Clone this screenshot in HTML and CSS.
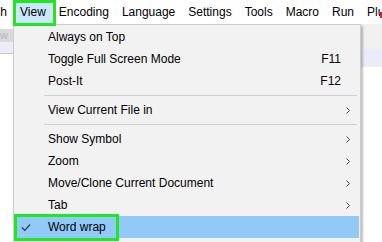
FILE: index.html
```
<!DOCTYPE html>
<html lang="en">
  <head>
    <meta charset="UTF-8">
    <title>View menu</title>
    <link rel="stylesheet" href="styles.css">
  </head>
  <body>
    <div class="app">
      <nav class="menubar">
        <span class="item">Search</span>
        <span class="item open">View</span>
        <span class="item">Encoding</span>
        <span class="item">Language</span>
        <span class="item">Settings</span>
        <span class="item">Tools</span>
        <span class="item">Macro</span>
        <span class="item">Run</span>
        <span class="item">Plugins</span>
      </nav>
      <div class="toolbar">
        <div class="side">
          <div class="gap"></div>
          <div class="btn">w</div>
          <div class="tabs"></div>
        </div>
        <div class="main">
          <div class="tools"></div>
          <div class="tabs"></div>
        </div>
      </div>
      <div class="editor"></div>

      <ul class="dropdown">
        <li><span class="label">Always on Top</span></li>
        <li><span class="label">Toggle Full Screen Mode</span><span class="key">F11</span></li>
        <li><span class="label">Post-It</span><span class="key">F12</span></li>
        <li class="sep"></li>
        <li><span class="label">View Current File in</span><svg class="arrow" width="4" height="7" viewBox="0 0 4 7"><polyline points="0.5,0.5 3.5,3.5 0.5,6.5" fill="none" stroke="#444" stroke-width="1"/></svg></li>
        <li class="sep"></li>
        <li><span class="label">Show Symbol</span><svg class="arrow" width="4" height="7" viewBox="0 0 4 7"><polyline points="0.5,0.5 3.5,3.5 0.5,6.5" fill="none" stroke="#444" stroke-width="1"/></svg></li>
        <li><span class="label">Zoom</span><svg class="arrow" width="4" height="7" viewBox="0 0 4 7"><polyline points="0.5,0.5 3.5,3.5 0.5,6.5" fill="none" stroke="#444" stroke-width="1"/></svg></li>
        <li><span class="label">Move/Clone Current Document</span><svg class="arrow" width="4" height="7" viewBox="0 0 4 7"><polyline points="0.5,0.5 3.5,3.5 0.5,6.5" fill="none" stroke="#444" stroke-width="1"/></svg></li>
        <li><span class="label">Tab</span><svg class="arrow" width="4" height="7" viewBox="0 0 4 7"><polyline points="0.5,0.5 3.5,3.5 0.5,6.5" fill="none" stroke="#444" stroke-width="1"/></svg></li>
        <li class="hover">
          <span class="check">
            <svg width="10" height="9" viewBox="0 0 10 9"><polyline points="1,4.5 3.8,7.3 9,1.5" fill="none" stroke="#2b3a4a" stroke-width="1.2"/></svg>
          </span>
          <span class="label">Word wrap</span>
        </li>
        <li><span class="label">&nbsp;</span></li>
      </ul>

      <div class="mark mark-view"></div>
      <div class="mark mark-wrap"></div>
      <div class="plug-mark"></div>
    </div>
  </body>
</html>
```
FILE: styles.css
```
html, body {
  margin: 0;
  padding: 0;
}
body {
  font-family: "Liberation Sans", Arial, sans-serif;
  font-size: 12px;
  color: #000;
  background: #fff;
}
.app {
  position: relative;
  width: 382px;
  height: 242px;
  overflow: hidden;
}
.menubar {
  display: flex;
  height: 24px;
  align-items: center;
  margin-left: -37.5px;
  background: #fff;
  white-space: nowrap;
}
.menubar .item {
  padding: 0 6.5px;
  line-height: 25px;
}
.menubar .item.open {
  background: #cce8ff;
}
.toolbar {
  display: flex;
}
.side {
  width: 13px;
}
.side .gap {
  height: 5px;
  background: #fff;
}
.side .btn {
  height: 13px;
  background: #dadada;
  color: #b5b5b5;
  font-size: 11px;
  line-height: 13px;
  overflow: hidden;
}
.side .tabs {
  height: 11px;
  background: #ececf8;
  border-bottom: 1px solid #c8c8c8;
}
.main {
  flex: 1;
}
.main .tools {
  height: 26px;
  background: #f0f0f0;
}
.main .tabs {
  height: 17px;
  background: #ececf8;
}
.editor {
  height: 170px;
  background: #fff;
}
.dropdown {
  position: absolute;
  left: 13px;
  top: 24px;
  width: 344px;
  margin: 0;
  padding: 1px;
  list-style: none;
  background: #f2f2f2;
  border: 1px solid #cccccc;
  box-shadow: 2px 2px 2px rgba(0, 0, 0, 0.25);
}
.dropdown li {
  display: flex;
  align-items: center;
  height: 22px;
  padding: 0 9px 0 33px;
  position: relative;
}
.dropdown .label {
  flex: 1;
}
.dropdown .key {
  margin-right: 9px;
}
.dropdown li.sep {
  height: 7px;
  padding: 0;
  margin-left: 29px;
  margin-right: 2px;
}
.dropdown li.sep::after {
  content: "";
  flex: 1;
  border-top: 1px solid #cfcfcf;
}
.dropdown li.hover {
  background: #91c9f7;
}
.dropdown .check {
  position: absolute;
  left: 5px;
  top: 0;
  width: 12px;
  height: 22px;
  display: flex;
  align-items: center;
  justify-content: center;
}
.mark {
  position: absolute;
  border: 3px solid #22e622;
}
.mark-view {
  left: 13px;
  top: 0;
  width: 37px;
  height: 20px;
}
.mark-wrap {
  left: 14px;
  top: 214px;
  width: 99px;
  height: 21px;
}
.plug-mark {
  position: absolute;
  left: 380px;
  top: 12px;
  width: 2px;
  height: 6px;
  background: #d02020;
}
```
